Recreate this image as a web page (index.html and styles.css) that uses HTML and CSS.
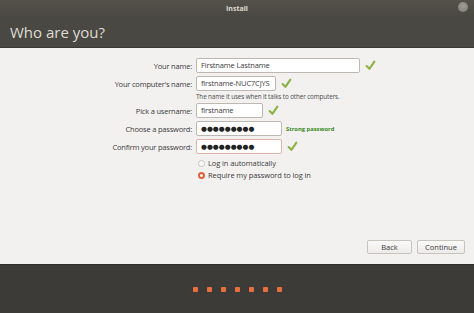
FILE: index.html
```html
<!DOCTYPE html>
<html lang="en">
<head>
    <meta charset="UTF-8">
    <title>Install</title>
    <link rel="stylesheet" href="styles.css">
</head>
<body>

<div class="window">
    <div class="titlebar">
        <span class="title">Install</span>
        <span class="close"></span>
    </div>
    <div class="header">Who are you?</div>

    <div class="content">
        <div class="form">
            <label>Your name:</label>
            <div class="field">
                <div class="input wide">Firstname Lastname</div>
                <svg class="check" viewBox="0 0 10 10"><path d="M1.5 5.5 L4 8 L8.5 1.5" /></svg>
            </div>

            <label>Your computer's name:</label>
            <div class="field">
                <div class="input medium">firstname-NUC7CJYS</div>
                <svg class="check" viewBox="0 0 10 10"><path d="M1.5 5.5 L4 8 L8.5 1.5" /></svg>
            </div>
            <div class="hint">The name it uses when it talks to other computers.</div>

            <label>Pick a username:</label>
            <div class="field">
                <div class="input small">firstname</div>
                <svg class="check" viewBox="0 0 10 10"><path d="M1.5 5.5 L4 8 L8.5 1.5" /></svg>
            </div>

            <label>Choose a password:</label>
            <div class="field">
                <div class="input pass">●●●●●●●●●</div>
                <span class="strong">Strong password</span>
            </div>

            <label>Confirm your password:</label>
            <div class="field">
                <div class="input pass error">●●●●●●●●●</div>
                <svg class="check" viewBox="0 0 10 10"><path d="M1.5 5.5 L4 8 L8.5 1.5" /></svg>
            </div>

            <div class="options">
                <div class="option"><span class="radio"></span>Log in automatically</div>
                <div class="option"><span class="radio on"></span>Require my password to log in</div>
            </div>
        </div>

        <div class="buttons">
            <button class="back">Back</button>
            <button class="continue">Continue</button>
        </div>
    </div>

    <div class="footer">
        <span class="dot"></span>
        <span class="dot"></span>
        <span class="dot"></span>
        <span class="dot"></span>
        <span class="dot"></span>
        <span class="dot"></span>
        <span class="dot"></span>
    </div>
</div>

</body>
</html>
```

FILE: styles.css
```css
body {
    margin: 0;
    font-family: "Open Sans", "DejaVu Sans", sans-serif;
    background-color: #3c3b37;
}
.window {
    width: 474px;
    height: 313px;
    display: flex;
    flex-direction: column;
}
.titlebar {
    height: 16px;
    position: relative;
    display: flex;
    align-items: center;
    justify-content: center;
    background: linear-gradient(#55524c, #4a4842);
}
.title {
    color: #dfdbd2;
    font-size: 7px;
    font-weight: bold;
}
.close {
    position: absolute;
    right: 6px;
    top: 2px;
    width: 10px;
    height: 10px;
    border-radius: 50%;
    background: radial-gradient(circle at 50% 40%, #a19e98, #7b7872);
}
.header {
    height: 31px;
    padding-left: 10px;
    display: flex;
    align-items: center;
    color: #dfdbd2;
    font-size: 15px;
    background-color: #4a4842;
    border-bottom: 1px solid #3a3935;
}
.content {
    flex: 1;
    background-color: #f2f1f0;
    display: flex;
    flex-direction: column;
    padding-top: 10px;
}
.form {
    display: grid;
    grid-template-columns: 192px 1fr;
    column-gap: 4px;
    row-gap: 3px;
    align-items: center;
}
.form label {
    text-align: right;
    font-size: 7.5px;
    letter-spacing: -0.2px;
    color: #3c3c3c;
    white-space: nowrap;
}
.field {
    display: flex;
    align-items: center;
    gap: 5px;
}
.input {
    height: 13px;
    line-height: 13px;
    padding: 0 4px;
    background-color: white;
    border: 1px solid #bdb9b2;
    border-radius: 2px;
    font-size: 7.5px;
    letter-spacing: -0.15px;
    color: #3c3c3c;
    white-space: nowrap;
    overflow: hidden;
    box-sizing: content-box;
}
.wide {
    width: 154px;
}
.medium {
    width: 70px;
}
.small {
    width: 57px;
}
.pass {
    width: 76px;
    font-size: 6.8px;
    letter-spacing: 0;
    color: #222;
}
.error {
    border-color: #e3b4a8;
}
.check {
    width: 11px;
    height: 11px;
}
.check path {
    fill: none;
    stroke: #8fb347;
    stroke-width: 2;
    stroke-linecap: round;
    stroke-linejoin: round;
}
.strong {
    color: #3a8a20;
    font-size: 5.8px;
    font-weight: bold;
    margin-left: -1px;
}
.hint {
    grid-column: 2;
    font-size: 6.3px;
    letter-spacing: -0.1px;
    color: #4c4c4c;
    margin-top: -2px;
    margin-bottom: -1px;
    white-space: nowrap;
}
.options {
    grid-column: 2;
    display: flex;
    flex-direction: column;
    gap: 2px;
    padding-left: 2px;
    margin-top: 1px;
}
.option {
    display: flex;
    align-items: center;
    gap: 3px;
    font-size: 7.5px;
    letter-spacing: -0.1px;
    color: #3c3c3c;
}
.radio {
    width: 5px;
    height: 5px;
    border-radius: 50%;
    border: 1px solid #c4c0b9;
    background-color: white;
}
.radio.on {
    border: 2px solid #e2603a;
    width: 3px;
    height: 3px;
}
.buttons {
    margin-top: auto;
    display: flex;
    justify-content: flex-end;
    gap: 5px;
    padding: 0 9px 10px 0;
}
.buttons button {
    height: 14px;
    padding: 0;
    font-family: inherit;
    font-size: 7.5px;
    color: #3c3c3c;
    border: 1px solid #c7c3bd;
    border-radius: 2px;
    background: linear-gradient(#fafaf9, #ecebe9);
}
.back {
    width: 45px;
}
.continue {
    width: 48px;
}
.footer {
    height: 48px;
    display: flex;
    align-items: center;
    justify-content: center;
    gap: 9px;
    background-color: #3c3b37;
    border-top: 1px solid #2e2d2a;
}
.dot {
    width: 5px;
    height: 5px;
    border-radius: 1px;
    background-color: #e8703f;
}
```
